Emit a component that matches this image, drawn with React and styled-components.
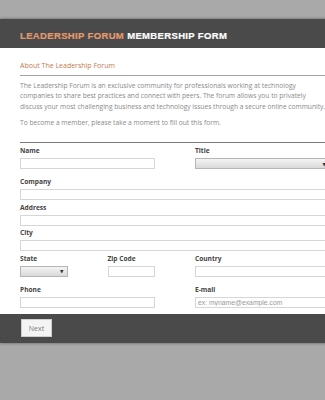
import React from "react";
import styled, { createGlobalStyle } from "styled-components";

const GlobalStyle = createGlobalStyle`
  html, body {
    margin: 0;
    padding: 0;
    background: #a9a9a9;
    overflow: hidden;
  }
  body {
    font-family: "Open Sans", "DejaVu Sans", sans-serif;
  }
`;

const Page = styled.div`
  width: 325px;
  height: 400px;
  padding-top: 19px;
  box-sizing: border-box;
  overflow: hidden;
`;

const FormCard = styled.div`
  width: 350px;
  background: #fff;
  box-shadow: 0 0 3px rgba(0, 0, 0, 0.45);
`;

const Header = styled.div`
  height: 29px;
  box-sizing: border-box;
  padding: 3px 20px 0;
  display: flex;
  align-items: center;
  background: #4a4a4a;
  font-family: "Liberation Sans", Arial, sans-serif;
  font-weight: bold;
  font-size: 9.5px;
  letter-spacing: 0.35px;
  color: #fff;
  white-space: nowrap;
  -webkit-text-stroke: 0.2px currentColor;
`;

const Accent = styled.span`
  color: #e39a6e;
`;

const Body = styled.div`
  padding: 13px 20px 4px;
`;

const SectionTitle = styled.div`
  font-size: 7px;
  line-height: 10px;
  color: #c27a4e;
  padding-bottom: 4px;
  border-bottom: 1.5px solid #a3a3a3;
`;

const Paragraph = styled.p`
  margin: ${(p) => p.$top}px 0 0;
  font-size: 6.65px;
  line-height: 10.3px;
  color: #8a8a8a;
  white-space: nowrap;
`;

const Divider = styled.div`
  margin: 14px 0 3px;
  border-top: 1.5px solid #7a7a7a;
`;

const Row = styled.div`
  display: grid;
  grid-template-columns: repeat(4, 47.5px);
  column-gap: 40px;
  margin-bottom: ${(p) => (p.$loose ? 8 : 2.5)}px;
`;

const Field = styled.div`
  grid-column: span ${(p) => p.$span || 1};
  display: flex;
  flex-direction: column;
  gap: 2px;
`;

const Label = styled.label`
  font-size: 6.6px;
  line-height: 10px;
  font-weight: bold;
  color: #444;
`;

const Input = styled.input`
  width: 100%;
  height: 11px;
  box-sizing: border-box;
  margin: 0;
  padding: 0 2px;
  border: 1px solid #d6d6d6;
  background: #fff;
  font-family: "Liberation Sans", Arial, sans-serif;
  font-size: 6.8px;
  outline: none;

  &::placeholder {
    color: #9a9a9a;
  }
`;

const SelectBox = styled.div`
  height: 11px;
  box-sizing: border-box;
  display: flex;
  align-items: center;
  justify-content: flex-end;
  padding-right: ${(p) => p.$arrowGap}px;
  border: 1px solid #b5b5b5;
  background: linear-gradient(#f4f4f4, #d9d9d9);
  font-size: 4.5px;
  color: #333;
`;

const Footer = styled.div`
  height: 29px;
  box-sizing: border-box;
  display: flex;
  align-items: center;
  padding: 0 21px 1px;
  background: #4a4a4a;
`;

const NextButton = styled.button`
  width: 31px;
  height: 18px;
  padding: 0;
  border: 1px solid #cfcfcf;
  background: #f4f4f4;
  color: #7a7a7a;
  font-family: "Open Sans", "DejaVu Sans", sans-serif;
  font-size: 7px;
`;

const App = () => (
  <Page>
    <GlobalStyle />
    <FormCard>
      <Header>
        <Accent>LEADERSHIP FORUM</Accent>&nbsp;MEMBERSHIP FORM
      </Header>
      <Body>
        <SectionTitle>About The Leadership Forum</SectionTitle>
        <Paragraph $top={5}>
          The Leadership Forum is an exclusive community for professionals working at technology
          <br />
          companies to share best practices and connect with peers. The forum allows you to privately
          <br />
          discuss your most challenging business and technology issues through a secure online community.
        </Paragraph>
        <Paragraph $top={6}>
          To become a member, please take a moment to fill out this form.
        </Paragraph>
        <Divider />

        <Row $loose>
          <Field $span={2}>
            <Label>Name</Label>
            <Input />
          </Field>
          <Field $span={2}>
            <Label>Title</Label>
            <SelectBox $arrowGap={3}>▼</SelectBox>
          </Field>
        </Row>
        <Row>
          <Field $span={4}>
            <Label>Company</Label>
            <Input />
          </Field>
        </Row>
        <Row>
          <Field $span={4}>
            <Label>Address</Label>
            <Input />
          </Field>
        </Row>
        <Row>
          <Field $span={4}>
            <Label>City</Label>
            <Input />
          </Field>
        </Row>
        <Row $loose>
          <Field>
            <Label>State</Label>
            <SelectBox $arrowGap={3}>▼</SelectBox>
          </Field>
          <Field>
            <Label>Zip Code</Label>
            <Input />
          </Field>
          <Field $span={2}>
            <Label>Country</Label>
            <Input />
          </Field>
        </Row>
        <Row>
          <Field $span={2}>
            <Label>Phone</Label>
            <Input />
          </Field>
          <Field $span={2}>
            <Label>E-mail</Label>
            <Input placeholder="ex: myname@example.com" />
          </Field>
        </Row>
      </Body>
      <Footer>
        <NextButton>Next</NextButton>
      </Footer>
    </FormCard>
  </Page>
);

export default App;
